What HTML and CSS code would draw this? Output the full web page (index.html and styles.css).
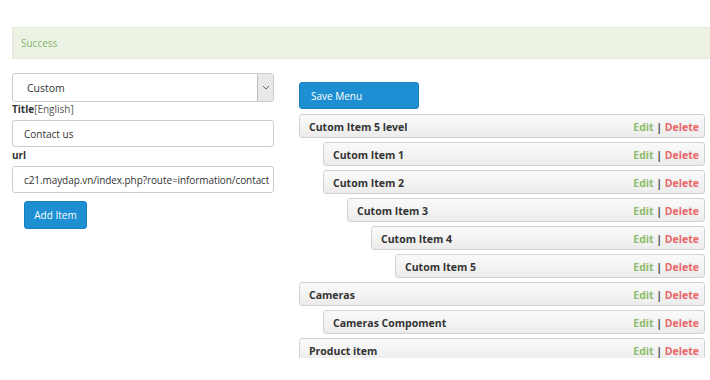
FILE: index.html
```html
<!DOCTYPE html>
<html lang="en">
<head>
  <meta charset="UTF-8" />
  <title>Menu Builder</title>
  <link rel="stylesheet" href="styles.css">
</head>
<body>
  <div class="page">
    <div class="alert-success">Success</div>

    <div class="row">
      <div class="left-col">
        <div class="select-wrap">
          <span class="select-value">Custom</span>
          <span class="select-arrow">
            <svg width="8" height="5" viewBox="0 0 8 5"><path d="M1 1 L4 4 L7 1" fill="none" stroke="#666" stroke-width="1"/></svg>
          </span>
        </div>
        <label class="field-label"><b>Title</b>[English]</label>
        <input class="text-input" type="text" value="Contact us" />
        <label class="field-label"><b>url</b></label>
        <input class="text-input url-input" type="text" value="c21.maydap.vn/index.php?route=information/contact" />
        <button class="btn add-btn">Add Item</button>
      </div>

      <div class="right-col">
        <button class="btn save-btn">Save Menu</button>
        <ul class="menu-list">
          <li class="menu-item lvl0"><span>Cutom Item 5 level</span><span class="actions"><a class="edit">Edit</a> | <a class="del">Delete</a></span></li>
          <li class="menu-item lvl1"><span>Cutom Item 1</span><span class="actions"><a class="edit">Edit</a> | <a class="del">Delete</a></span></li>
          <li class="menu-item lvl1"><span>Cutom Item 2</span><span class="actions"><a class="edit">Edit</a> | <a class="del">Delete</a></span></li>
          <li class="menu-item lvl2"><span>Cutom Item 3</span><span class="actions"><a class="edit">Edit</a> | <a class="del">Delete</a></span></li>
          <li class="menu-item lvl3"><span>Cutom Item 4</span><span class="actions"><a class="edit">Edit</a> | <a class="del">Delete</a></span></li>
          <li class="menu-item lvl4"><span>Cutom Item 5</span><span class="actions"><a class="edit">Edit</a> | <a class="del">Delete</a></span></li>
          <li class="menu-item lvl0"><span>Cameras</span><span class="actions"><a class="edit">Edit</a> | <a class="del">Delete</a></span></li>
          <li class="menu-item lvl1"><span>Cameras Compoment</span><span class="actions"><a class="edit">Edit</a> | <a class="del">Delete</a></span></li>
          <li class="menu-item lvl0"><span>Product item</span><span class="actions"><a class="edit">Edit</a> | <a class="del">Delete</a></span></li>
        </ul>
      </div>
    </div>
  </div>
</body>
</html>
```

FILE: styles.css
```css
body {
  margin: 0;
  font-family: 'Open Sans', 'Liberation Sans', sans-serif;
  font-size: 11px;
  color: #333;
  background: #fff;
}

.page {
  height: 358px;
  overflow: hidden;
  padding: 27px 0 0 12px;
  box-sizing: border-box;
}

.alert-success {
  background: #ecf2e4;
  border: 1px solid #e3ebd8;
  border-right: none;
  color: #86b56c;
  height: 32px;
  box-sizing: border-box;
  padding: 0 8px;
  display: flex;
  align-items: center;
  font-size: 10px;
}

.row {
  display: flex;
  margin-top: 14px;
}

.left-col {
  width: 262px;
  display: flex;
  flex-direction: column;
}

.select-wrap {
  height: 29px;
  border: 1px solid #ccc;
  border-radius: 3px;
  display: flex;
  align-items: center;
  box-sizing: border-box;
  font-size: 10.5px;
}

.select-value {
  flex: 1;
  padding-left: 14px;
}

.select-arrow {
  width: 15px;
  align-self: stretch;
  background: #e8e8e8;
  border-left: 1px solid #bbb;
  display: flex;
  align-items: center;
  justify-content: center;
  border-radius: 0 2px 2px 0;
}

.field-label {
  font-size: 10px;
  color: #555;
  margin: 0 0 4px;
  line-height: 14px;
}

.field-label b {
  color: #333;
}

.text-input {
  height: 27px;
  border: 1px solid #ccc;
  border-radius: 3px;
  padding: 0 11px;
  font-family: inherit;
  font-size: 10px;
  color: #333;
  box-sizing: border-box;
  width: 100%;
  margin: 0 0 1px;
}

.url-input {
  padding-right: 4px;
  letter-spacing: -0.08px;
}

.btn {
  background: #1d8fd2;
  border: 1px solid #1a80bd;
  border-radius: 3px;
  color: #fff;
  font-family: inherit;
  font-size: 10px;
  text-align: left;
  cursor: pointer;
}

.add-btn {
  width: 63px;
  height: 28px;
  margin: 7px 0 0 12px;
  text-align: center;
  padding: 0;
}

.right-col {
  flex: 1;
  margin-left: 25px;
  margin-right: 5px;
  padding-top: 9px;
}

.save-btn {
  width: 120px;
  height: 27px;
  padding: 0 11px;
  margin-bottom: 5px;
  display: block;
}

.menu-list {
  list-style: none;
  margin: 0;
  padding: 0;
}

.menu-item {
  height: 24px;
  margin-bottom: 4px;
  border: 1px solid #d2d2d2;
  border-radius: 3px;
  background: linear-gradient(#fafafa, #ececec);
  display: flex;
  align-items: center;
  justify-content: space-between;
  padding: 1px 5px 0 9px;
  box-sizing: border-box;
  font-weight: bold;
  font-size: 10.5px;
}

.lvl1 { margin-left: 24px; }
.lvl2 { margin-left: 48px; }
.lvl3 { margin-left: 72px; }
.lvl4 { margin-left: 96px; }

.actions {
  color: #444;
}

.edit {
  color: #8fbc6d;
}

.del {
  color: #e8676a;
}
```
